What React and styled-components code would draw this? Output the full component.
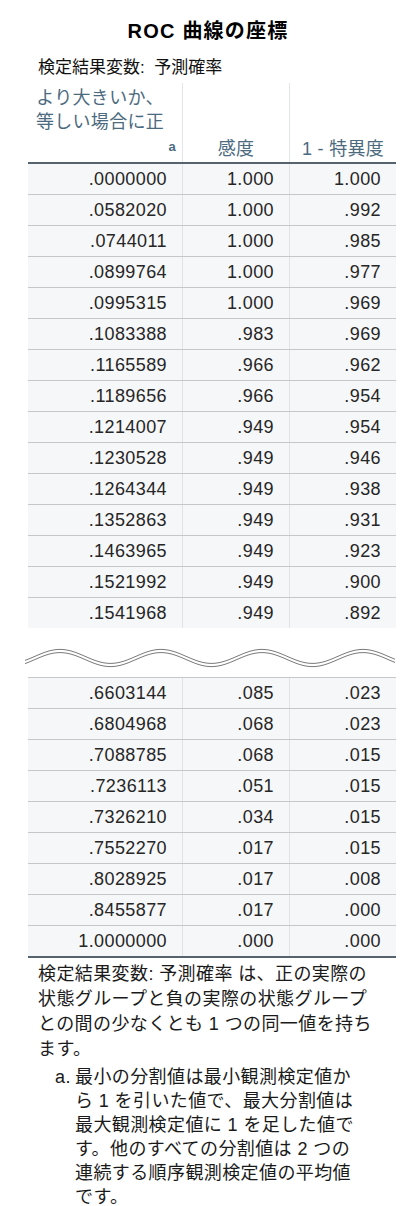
import React from 'react';
import styled, { createGlobalStyle } from 'styled-components';

const GlobalStyle = createGlobalStyle`
  body {
    margin: 0;
    background: #ffffff;
    font-family: "Liberation Sans", "Noto Sans CJK JP", sans-serif;
  }
`;

const topRows = [
  ['.0000000', '1.000', '1.000'],
  ['.0582020', '1.000', '.992'],
  ['.0744011', '1.000', '.985'],
  ['.0899764', '1.000', '.977'],
  ['.0995315', '1.000', '.969'],
  ['.1083388', '.983', '.969'],
  ['.1165589', '.966', '.962'],
  ['.1189656', '.966', '.954'],
  ['.1214007', '.949', '.954'],
  ['.1230528', '.949', '.946'],
  ['.1264344', '.949', '.938'],
  ['.1352863', '.949', '.931'],
  ['.1463965', '.949', '.923'],
  ['.1521992', '.949', '.900'],
  ['.1541968', '.949', '.892'],
];

const bottomRows = [
  ['.6603144', '.085', '.023'],
  ['.6804968', '.068', '.023'],
  ['.7088785', '.068', '.015'],
  ['.7236113', '.051', '.015'],
  ['.7326210', '.034', '.015'],
  ['.7552270', '.017', '.015'],
  ['.8028925', '.017', '.008'],
  ['.8455877', '.017', '.000'],
  ['1.0000000', '.000', '.000'],
];

const Page = styled.div`
  width: 416px;
  padding-top: 18px;
`;

const Title = styled.div`
  text-align: center;
  font-size: 20px;
  font-weight: bold;
  line-height: 26px;
  letter-spacing: 1.2px;
  color: #000;
`;

const Subtitle = styled.div`
  margin: 11px 0 0 38px;
  font-size: 17px;
  line-height: 26px;
  color: #111;
  white-space: pre;
`;

const Table = styled.div`
  margin: ${p => (p.$tail ? '0' : '2px')} 0 0 28px;
  width: 368px;
`;

const HeadRow = styled.div`
  display: grid;
  grid-template-columns: 154px 107px 107px;
  height: 79px;
  border-bottom: 2px solid #56636e;
`;

const HeadCell = styled.div`
  display: flex;
  flex-direction: column;
  align-items: center;
  justify-content: ${p => (p.$top ? 'flex-start' : 'flex-end')};
  padding: ${p => (p.$top ? '3px 10px 0 0' : '0 0 1px 0')};
  border-left: ${p => (p.$first ? 'none' : '1px solid #e2e4e6')};
  color: #4b6a80;
  font-size: 18px;
  line-height: 24px;
  letter-spacing: 0.3px;
  white-space: nowrap;
`;

const HeadLine = styled.span``;

const Sup = styled.span`
  align-self: flex-end;
  margin-right: -4px;
  font-size: 13px;
  line-height: 26px;
  font-weight: bold;
`;

const Section = styled.div`
  border-top: ${p => (p.$open ? '1px solid #c5c7ca' : 'none')};
`;

const Row = styled.div`
  display: grid;
  grid-template-columns: 154px 107px 107px;
  grid-template-rows: 30px;
  height: 30px;
  border-bottom: ${p =>
    p.$end === 'none' ? 'none' : p.$end === 'thick' ? '2px solid #56636e' : '1px solid #c5c7ca'};
`;

const Cell = styled.div`
  background: #f6f7f9;
  text-align: right;
  padding-right: 15px;
  line-height: 30px;
  font-size: 18px;
  letter-spacing: 0.4px;
  color: #262626;
  border-left: ${p => (p.$first ? 'none' : '1px solid #e1e3e5')};
`;

const Break = styled.div`
  height: 49px;
  svg {
    display: block;
  }
`;

const Footnote = styled.div`
  margin: 4px 0 0 38px;
  font-size: 18px;
  line-height: 25px;
  letter-spacing: 0.4px;
  color: #1a1a1a;
  white-space: nowrap;
`;

const Note = styled.div`
  display: flex;
  margin: 3px 0 0 55px;
  font-size: 18px;
  line-height: 24px;
  letter-spacing: 0.4px;
  color: #1a1a1a;
  white-space: nowrap;
`;

const Marker = styled.span`
  width: 20px;
  flex: none;
`;

const wavePath = offset => {
  const pts = [];
  for (let x = 25; x <= 395; x += 2) {
    const y = 30 + offset - 7 * Math.sin((2 * Math.PI * (x - 34.75)) / 101);
    pts.push(`${x},${y.toFixed(2)}`);
  }
  return 'M' + pts.join(' L');
};

const Wave = () => (
  <svg width="416" height="49" viewBox="0 0 416 49">
    <path d={wavePath(-1.6)} fill="none" stroke="#7a7a7a" strokeWidth="1" />
    <path d={wavePath(1.6)} fill="none" stroke="#7a7a7a" strokeWidth="1" />
  </svg>
);

const DataRows = ({ rows, lastEnd }) =>
  rows.map((r, i) => (
    <Row key={r[0]} $end={i === rows.length - 1 ? lastEnd : 'thin'}>
      <Cell $first>{r[0]}</Cell>
      <Cell>{r[1]}</Cell>
      <Cell>{r[2]}</Cell>
    </Row>
  ));

const App = () => (
  <Page>
    <GlobalStyle />
    <Title>ROC 曲線の座標</Title>
    <Subtitle>検定結果変数:  予測確率</Subtitle>
    <Table>
      <HeadRow>
        <HeadCell $first $top>
          <HeadLine>より大きいか、</HeadLine>
          <HeadLine>等しい場合に正</HeadLine>
          <Sup>a</Sup>
        </HeadCell>
        <HeadCell>感度</HeadCell>
        <HeadCell>1 - 特異度</HeadCell>
      </HeadRow>
      <Section>
        <DataRows rows={topRows} lastEnd="none" />
      </Section>
    </Table>
    <Break>
      <Wave />
    </Break>
    <Table $tail>
      <Section $open>
        <DataRows rows={bottomRows} lastEnd="thick" />
      </Section>
    </Table>
    <Footnote>
      検定結果変数: 予測確率 は、正の実際の
      <br />
      状態グループと負の実際の状態グループ
      <br />
      との間の少なくとも 1 つの同一値を持ち
      <br />
      ます。
    </Footnote>
    <Note>
      <Marker>a.</Marker>
      <div>
        最小の分割値は最小観測検定値か
        <br />
        ら 1 を引いた値で、最大分割値は
        <br />
        最大観測検定値に 1 を足した値で
        <br />
        す。他のすべての分割値は 2 つの
        <br />
        連続する順序観測検定値の平均値
        <br />
        です。
      </div>
    </Note>
  </Page>
);

export default App;
